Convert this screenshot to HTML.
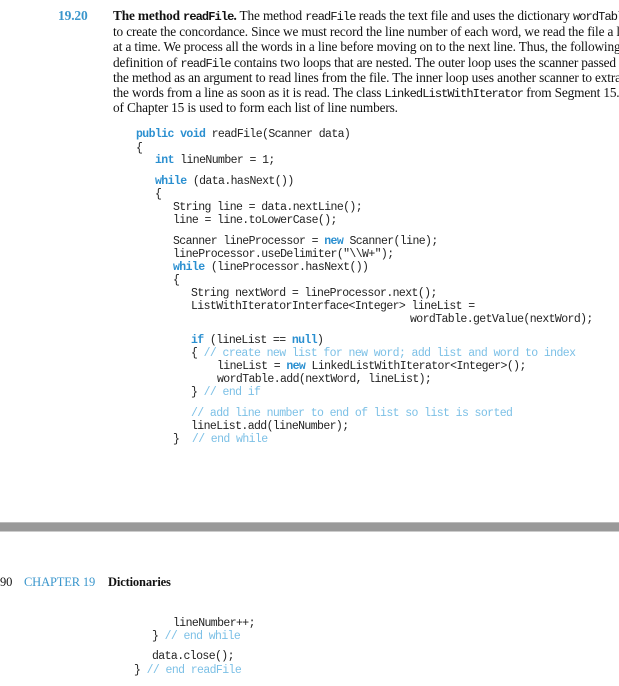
<!DOCTYPE html>
<html><head><meta charset="utf-8"><style>
html,body{margin:0;padding:0;background:#fff;width:619px;height:686px;overflow:hidden;position:relative}
.l{position:absolute;white-space:nowrap;line-height:14px}
.p{font-family:"Liberation Serif",serif;font-size:13.3px;color:#111;left:113px;letter-spacing:-0.15px}
.c{font-family:"Liberation Mono",monospace;font-size:11.5px;letter-spacing:-0.6px;color:#222}
.k{color:#2a8fd0;font-weight:bold}
.m{color:#7cc0e6}
.t{font-family:"Liberation Mono",monospace;font-size:12px;letter-spacing:-0.9px}
.b{font-weight:bold}
.blue{color:#3a96cc}
</style></head><body>
<div class="l p blue b" style="left:58px;top:9px;font-size:13.5px">19.20</div>
<div class="l p" style="top:9px"><b>The method <span class="t">readFile</span>.</b> The method <span class="t">readFile</span> reads the text file and uses the dictionary <span class="t">wordTable</span></div>
<div class="l p" style="top:25px">to create the concordance. Since we must record the line number of each word, we read the file a line</div>
<div class="l p" style="top:40px">at a time. We process all the words in a line before moving on to the next line. Thus, the following</div>
<div class="l p" style="top:56px">definition of <span class="t">readFile</span> contains two loops that are nested. The outer loop uses the scanner passed to</div>
<div class="l p" style="top:71px">the method as an argument to read lines from the file. The inner loop uses another scanner to extract</div>
<div class="l p" style="top:86px">the words from a line as soon as it is read. The class <span class="t">LinkedListWithIterator</span> from Segment 15.1</div>
<div class="l p" style="top:101px">of Chapter 15 is used to form each list of line numbers.</div>

<div class="l c" style="left:136px;top:128px"><span class="k">public void</span> readFile(Scanner data)</div>
<div class="l c" style="left:136px;top:142px">{</div>
<div class="l c" style="left:155px;top:154px"><span class="k">int</span> lineNumber = 1;</div>
<div class="l c" style="left:155px;top:175px"><span class="k">while</span> (data.hasNext())</div>
<div class="l c" style="left:155px;top:188px">{</div>
<div class="l c" style="left:173px;top:201px">String line = data.nextLine();</div>
<div class="l c" style="left:173px;top:214px">line = line.toLowerCase();</div>
<div class="l c" style="left:173px;top:235px">Scanner lineProcessor = <span class="k">new</span> Scanner(line);</div>
<div class="l c" style="left:173px;top:248px">lineProcessor.useDelimiter("\\W+");</div>
<div class="l c" style="left:173px;top:261px"><span class="k">while</span> (lineProcessor.hasNext())</div>
<div class="l c" style="left:173px;top:274px">{</div>
<div class="l c" style="left:191px;top:287px">String nextWord = lineProcessor.next();</div>
<div class="l c" style="left:191px;top:300px">ListWithIteratorInterface&lt;Integer&gt; lineList =</div>
<div class="l c" style="left:410px;top:313px">wordTable.getValue(nextWord);</div>
<div class="l c" style="left:191px;top:334px"><span class="k">if</span> (lineList == <span class="k">null</span>)</div>
<div class="l c" style="left:191px;top:347px">{ <span class="m">// create new list for new word; add list and word to index</span></div>
<div class="l c" style="left:217px;top:360px">lineList = <span class="k">new</span> LinkedListWithIterator&lt;Integer&gt;();</div>
<div class="l c" style="left:217px;top:373px">wordTable.add(nextWord, lineList);</div>
<div class="l c" style="left:191px;top:386px">} <span class="m">// end if</span></div>
<div class="l c" style="left:191px;top:407px"><span class="m">// add line number to end of list so list is sorted</span></div>
<div class="l c" style="left:191px;top:420px">lineList.add(lineNumber);</div>
<div class="l c" style="left:173px;top:433px">}&nbsp; <span class="m">// end while</span></div>

<div style="position:absolute;left:0;top:522px;width:619px;height:10px;background:#999;border-top:1px solid #bbb;border-bottom:1px solid #ccc;box-sizing:border-box"></div>

<div class="l p" style="left:0;top:575px;font-size:12.5px">90</div>
<div class="l p blue" style="left:24px;top:575px;font-size:12.5px">CHAPTER 19</div>
<div class="l p b" style="left:108px;top:575px;font-size:12.5px">Dictionaries</div>
<div class="l c" style="left:173px;top:617px">lineNumber++;</div>
<div class="l c" style="left:152px;top:630px">} <span class="m">// end while</span></div>
<div class="l c" style="left:152px;top:650px">data.close();</div>
<div class="l c" style="left:134px;top:664px">} <span class="m">// end readFile</span></div>
</body></html>
